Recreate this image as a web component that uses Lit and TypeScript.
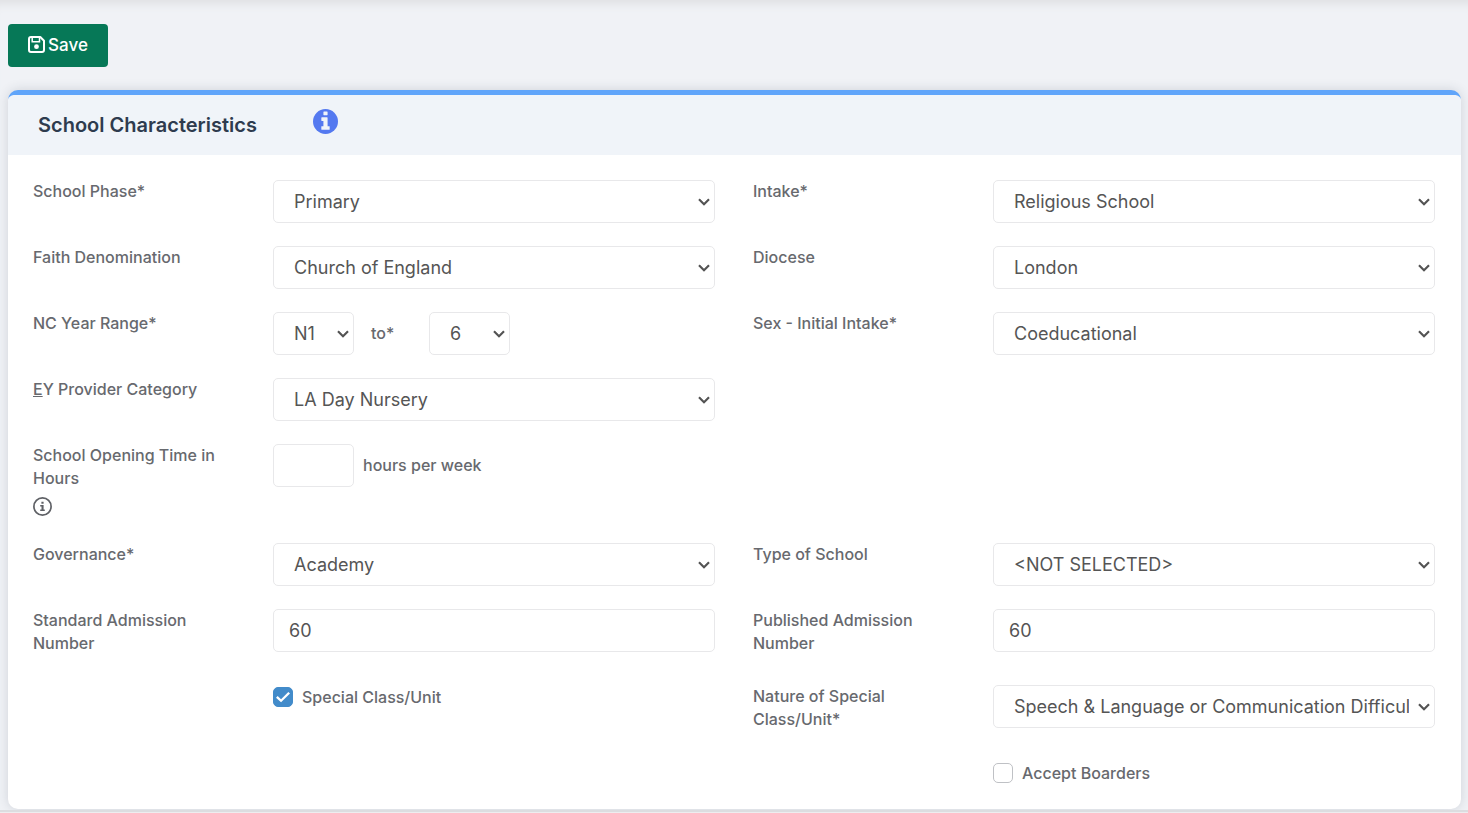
import { LitElement, html, css, svg, nothing, TemplateResult } from "lit";
import { customElement } from "lit/decorators.js";

const saveIcon = html`<svg class="save-icon" viewBox="0 0 17 17" aria-hidden="true">
  ${svg`<path fill="none" stroke="currentColor" stroke-width="2" stroke-linejoin="round" d="M3 1h9.300L16 4.700V14a2 2 0 0 1-2 2H3a2 2 0 0 1-2-2V3a2 2 0 0 1 2-2z"/>
  <path fill="none" stroke="currentColor" stroke-width="1.500" d="M4.200 1.500v4.300h7.300V1.500"/>
  <circle cx="8.500" cy="10.700" r="2.400" fill="currentColor"/>`}
</svg>`;

const infoSolid = html`<svg class="info-solid" viewBox="128 128 1536 1536" role="img" aria-label="Information">
  ${svg`<circle cx="896" cy="896" r="768" fill="currentColor"/>
  <path fill="#f0f4f9" d="M1152 1376v-160q0-14-9-23t-23-9h-96v-512q0-14-9-23t-23-9h-320q-14 0-23 9t-9 23v160q0 14 9 23t23 9h96v320h-96q-14 0-23 9t-9 23v160q0 14 9 23t23 9h448q14 0 23-9t9-23zM1024 480v-160q0-14-9-23t-23-9h-192q-14 0-23 9t-9 23v160q0 14 9 23t23 9h192q14 0 23-9t9-23z"/>`}
</svg>`;

const infoOutline = html`<svg class="info-outline" viewBox="0 0 19 19" role="img" aria-label="Information">
  ${svg`<circle cx="9.500" cy="9.500" r="8.600" fill="none" stroke="currentColor" stroke-width="1.700"/>
  <path fill="currentColor" d="M8.400 4.800h2.200v2h-2.200zM7.200 8h3.400v4.400h1.200v1.500H7.200v-1.500h1.300V9.500H7.200z"/>`}
</svg>`;

@customElement("app-root")
export class AppRoot extends LitElement {
  static styles = css`
    :host {
      display: block;
      min-height: 100vh;
      box-sizing: border-box;
      padding-top: 24px;
      background: #f0f2f6;
      box-shadow: inset 0 12px 10px -8px #dfe0e3;
      color: #67696e;
      font: 500 16px/23px Inter, sans-serif;
    }
    * { box-sizing: border-box; }
    .page { padding: 0 7px 0 8px; }
    .save {
      display: flex;
      align-items: center;
      justify-content: center;
      gap: 3px;
      width: 100px;
      height: 43px;
      padding: 0 0 2px;
      border: 0;
      border-radius: 4px;
      background: #067857;
      color: #fff;
      font: 500 17px/24px Inter, sans-serif;
    }
    .save-icon { width: 17px; height: 17px; }
    .card {
      margin-top: 23px;
      border-top: 5px solid #60a5fa;
      border-radius: 10px;
      background: #fff;
      box-shadow: 0 0 12px rgba(40, 50, 70, 0.16);
    }
    .card-head {
      display: flex;
      align-items: center;
      gap: 56px;
      height: 60px;
      padding: 0 30px;
      border-radius: 6px 6px 0 0;
      background: #f0f4f9;
    }
    .title {
      margin: 0;
      color: #2e3b4e;
      font-size: 20px;
      font-weight: 600;
      line-height: 28px;
    }
    .info-solid { width: 25px; height: 25px; margin-bottom: 7px; color: #5479f0; }
    .rows {
      display: grid;
      gap: 23px;
      padding: 25px 26px 24px 25px;
    }
    .row {
      display: grid;
      grid-template-columns: repeat(2, minmax(0, 1fr));
      gap: 38px;
    }
    .field {
      display: grid;
      grid-template-columns: minmax(0, 1fr) minmax(0, 2fr);
      gap: 19px;
    }
    .caption { padding-right: 12px; }
    .caption label { display: block; margin-bottom: 7px; }
    .info-outline { display: block; width: 19px; height: 19px; margin-bottom: 4px; color: #5f6166; }
    .control {
      display: flex;
      align-items: center;
      gap: 9px;
      height: 43px;
    }
    .control.check { height: 24px; }
    .control select, .control .text {
      width: 100%;
      height: 43px;
      margin: 0;
      padding: 0 15px;
      border: 1px solid #e8e8ea;
      border-radius: 5px;
      background-color: #fff;
      color: #555;
      font: 400 18px/24px Inter, sans-serif;
    }
    .control select {
      appearance: none;
      padding: 0 25px 0 20px;
      background-image: url("data:image/svg+xml,%3Csvg xmlns='http://www.w3.org/2000/svg' width='12' height='8' fill='none' stroke='%23555' stroke-width='2.2'%3E%3Cpath d='M1 1.200l5 5 5-5'/%3E%3C/svg%3E");
      background-repeat: no-repeat;
      background-position: right 4px center;
    }
    .control .narrow { flex: none; width: 81px; }
    .to { width: 57px; padding-left: 8px; }
    .tick {
      appearance: none;
      flex: none;
      display: grid;
      place-items: center;
      width: 20px;
      height: 20px;
      margin: 0;
      border: 1px solid #bfc1c5;
      border-radius: 5px;
      background: #fff;
    }
    .tick:checked { border-color: #428bca; background: #428bca; }
    .tick:checked::before {
      content: "";
      width: 14px;
      height: 11px;
      background: #fff;
      clip-path: polygon(0 56%, 12% 42%, 36% 70%, 88% 4%, 100% 18%, 36% 98%);
    }
    .foot {
      height: 3px;
      margin-top: 1px;
      border-top: 2px solid #dcdde0;
      background: #ededef;
    }
  `;

  private select(id: string, value: string, cls = "") {
    return html`<select id=${id} class=${cls}><option>${value}</option></select>`;
  }

  private field(id: string, caption: unknown, control: TemplateResult, extra: unknown = nothing) {
    return html`<div class="field">
      <div class="caption"><label for=${id}>${caption}</label>${extra}</div>
      <div class="control">${control}</div>
    </div>`;
  }

  private pick(id: string, caption: unknown, value: string) {
    return this.field(id, caption, this.select(id, value));
  }

  private entry(id: string, caption: string, value: string) {
    return this.field(id, caption, html`<input class="text" type="text" id=${id} .value=${value} />`);
  }

  private check(id: string, caption: string, checked: boolean) {
    return html`<div class="field">
      <div></div>
      <div class="control check">
        <input class="tick" type="checkbox" id=${id} ?checked=${checked} />
        <label for=${id}>${caption}</label>
      </div>
    </div>`;
  }

  render() {
    return html`
      <main class="page">
        <button class="save" type="button">${saveIcon}<span>Save</span></button>
        <section class="card">
          <header class="card-head">
            <h1 class="title">School Characteristics</h1>
            ${infoSolid}
          </header>
          <form class="rows">
            <div class="row">
              ${this.pick("phase", "School Phase*", "Primary")}
              ${this.pick("intake", "Intake*", "Religious School")}
            </div>
            <div class="row">
              ${this.pick("faith", "Faith Denomination", "Church of England")}
              ${this.pick("diocese", "Diocese", "London")}
            </div>
            <div class="row">
              ${this.field("year-from", "NC Year Range*", html`
                ${this.select("year-from", "N1", "narrow")}
                <label class="to" for="year-to">to*</label>
                ${this.select("year-to", "6", "narrow")}`)}
              ${this.pick("sex", "Sex - Initial Intake*", "Coeducational")}
            </div>
            <div class="row">
              ${this.pick("provider", html`<u>E</u>Y Provider Category`, "LA Day Nursery")}
            </div>
            <div class="row">
              ${this.field("hours", "School Opening Time in Hours", html`
                <input class="text narrow" type="text" id="hours" />
                <span>hours per week</span>`, infoOutline)}
            </div>
            <div class="row">
              ${this.pick("governance", "Governance*", "Academy")}
              ${this.pick("type", "Type of School", "<NOT SELECTED>")}
            </div>
            <div class="row">
              ${this.entry("standard", "Standard Admission Number", "60")}
              ${this.entry("published", "Published Admission Number", "60")}
            </div>
            <div class="row">
              ${this.check("special", "Special Class/Unit", true)}
              ${this.pick("nature", "Nature of Special Class/Unit*", "Speech & Language or Communication Difficulties")}
            </div>
            <div class="row">
              <div></div>
              ${this.check("boarders", "Accept Boarders", false)}
            </div>
          </form>
        </section>
      </main>
      <footer class="foot"></footer>
    `;
  }
}
